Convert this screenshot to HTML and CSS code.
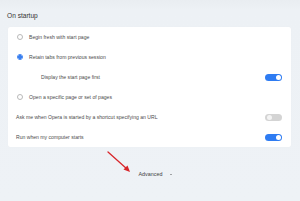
FILE: index.html
```html
<!DOCTYPE html>
<html>
<head>
<meta charset="utf-8">
<link rel="stylesheet" href="styles.css">
</head>
<body>
<div class="page">
  <div class="heading">On startup</div>
  <div class="card">
    <div class="row radio-row">
      <span class="radio"></span>
      <span class="label">Begin fresh with start page</span>
    </div>
    <div class="row radio-row">
      <span class="radio checked"></span>
      <span class="label">Retain tabs from previous session</span>
    </div>
    <div class="row sub-row">
      <span class="label">Display the start page first</span>
      <span class="toggle on"></span>
    </div>
    <div class="row radio-row">
      <span class="radio"></span>
      <span class="label">Open a specific page or set of pages</span>
    </div>
    <div class="row toggle-row">
      <span class="label">Ask me when Opera is started by a shortcut specifying an URL</span>
      <span class="toggle"></span>
    </div>
    <div class="row toggle-row">
      <span class="label">Run when my computer starts</span>
      <span class="toggle on"></span>
    </div>
  </div>
  <div class="advanced">
    <span class="adv-label">Advanced</span>
    <span class="caret"></span>
  </div>
  <svg class="red-arrow" width="30" height="26" viewBox="0 0 30 26">
    <line x1="1" y1="1" x2="20" y2="18" stroke="#d8262b" stroke-width="1.3" stroke-linecap="round"/>
    <polygon points="23,21 16.5,18.5 20.5,14.5" fill="#d8262b"/>
  </svg>
</div>
</body>
</html>
```
FILE: styles.css
```css
html, body {
  margin: 0;
  padding: 0;
}
body {
  width: 300px;
  height: 201px;
  overflow: hidden;
  background: linear-gradient(#e9edf1 0px, #edf1f5 10px, #eef2f6 100%);
  font-family: "Liberation Sans", Arial, sans-serif;
  color: #3a3a3a;
}
.page {
  position: relative;
  padding: 12px 9px 0 8px;
}
.heading {
  font-size: 6.6px;
  line-height: 8px;
  font-weight: 500;
  color: #333;
  margin-left: -1px;
}
.card {
  margin-top: 7px;
  width: 283px;
  background: #fff;
  border-radius: 2px;
  box-shadow: 0 0 1px rgba(0,0,0,0.06);
  display: flex;
  flex-direction: column;
}
.row {
  height: 20px;
  display: flex;
  align-items: center;
  font-size: 5.1px;
  color: #4a4a4a;
}
.radio-row {
  padding-left: 9px;
  gap: 6px;
}
.sub-row, .toggle-row {
  justify-content: space-between;
  padding-right: 9px;
}
.sub-row {
  padding-left: 33px;
}
.toggle-row {
  padding-left: 8px;
}
.radio {
  width: 6px;
  height: 6px;
  box-sizing: border-box;
  border: 0.8px solid #b9b9b9;
  border-radius: 50%;
  flex: none;
}
.radio.checked {
  border-color: #3a80f0;
  background: radial-gradient(circle, #3a80f0 0 1.6px, #fff 1.7px);
}
.toggle {
  width: 17px;
  height: 7px;
  border-radius: 4px;
  background: #d4d4d4;
  position: relative;
  flex: none;
}
.toggle::after {
  content: "";
  position: absolute;
  top: 1px;
  left: 1.5px;
  width: 5px;
  height: 5px;
  border-radius: 50%;
  background: #f4f4f4;
}
.toggle.on {
  background: #2f7cf2;
}
.toggle.on::after {
  left: auto;
  right: 1.5px;
  background: #fff;
}
.advanced {
  margin-top: 23px;
  display: flex;
  align-items: center;
  justify-content: center;
  gap: 8px;
  padding-left: 6px;
  font-size: 5.4px;
  line-height: 8px;
  color: #444;
  width: 283px;
}
.caret {
  width: 0;
  height: 0;
  border-left: 1.6px solid transparent;
  border-right: 1.6px solid transparent;
  border-top: 1.8px solid #555;
}
.red-arrow {
  position: absolute;
  left: 107px;
  top: 151px;
}
```
